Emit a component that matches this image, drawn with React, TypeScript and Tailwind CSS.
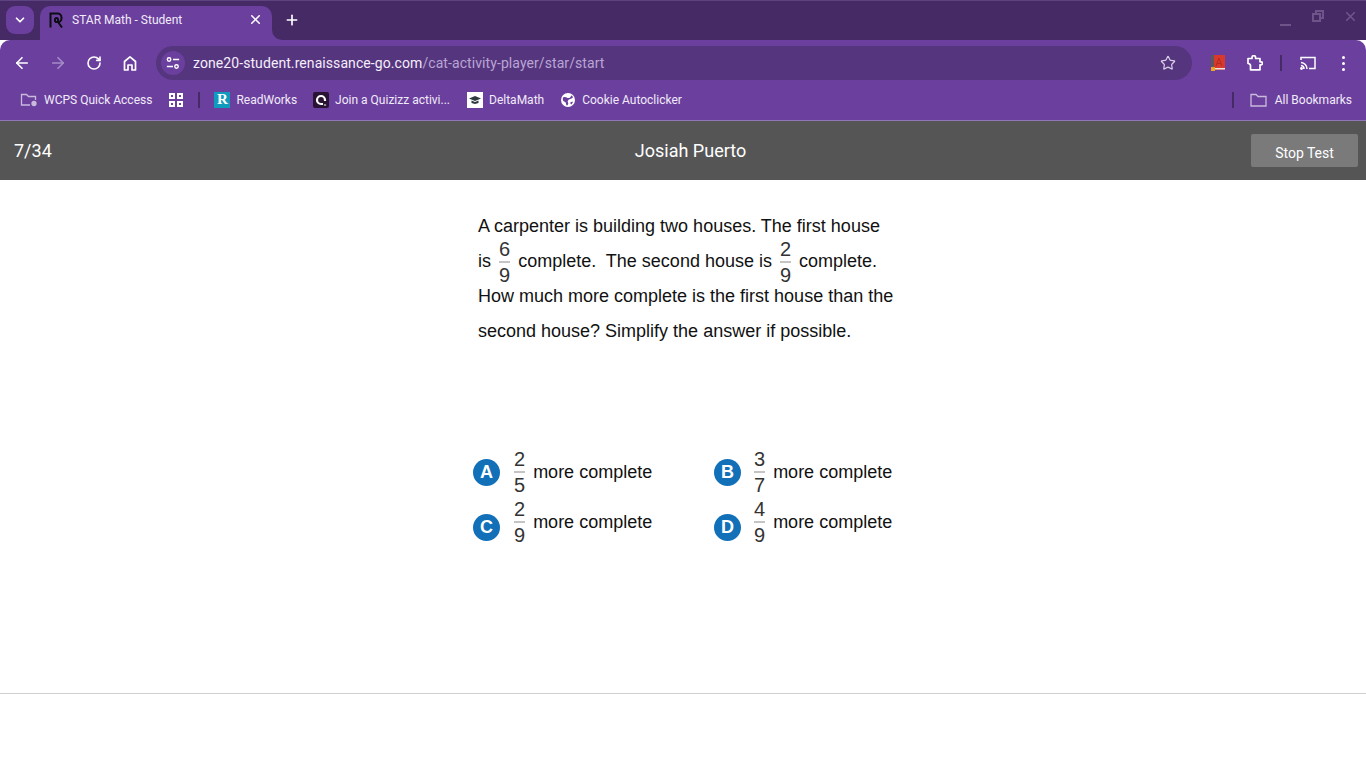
import { ArrowLeft, ArrowRight, ChevronDown, Plus, RotateCw, Star, X } from "lucide-react"

function Frac({ top, bottom }: { top: string; bottom: string }) {
  return (
    <span className="flex flex-col items-center text-[20px] leading-[24px] text-[#333]">
      <span className="h-[24px]">{top}</span>
      <span className="h-[2px] w-[11px] bg-[#c4c4c4]" />
      <span className="h-[24px]">{bottom}</span>
    </span>
  )
}

function Choice({ letter, top, bottom, badgeDrop, wide }: { letter: string; top: string; bottom: string; badgeDrop?: boolean; wide?: boolean }) {
  return (
    <div className="flex h-[50px] items-center">
      <span className={`flex h-[27px] w-[27px] items-center justify-center rounded-full bg-[#1170b8] text-[18px] font-bold text-white ${badgeDrop ? "mt-[10px]" : ""}`}>
        {letter}
      </span>
      <span className={wide ? "ml-[14px]" : "ml-[13px]"}>
        <Frac top={top} bottom={bottom} />
      </span>
      <span className="ml-[8px] text-[18px] text-[#111]">more complete</span>
    </div>
  )
}

function Bookmark({ icon, label, className }: { icon: React.ReactNode; label: string; className?: string }) {
  return (
    <div className={`flex items-center ${className ?? ""}`}>
      {icon}
      <span className="ml-[6px] whitespace-nowrap text-[12px] text-[#f1ebf8]">{label}</span>
    </div>
  )
}

export default function App() {
  return (
    <div className="flex h-[768px] flex-col overflow-hidden bg-white font-['Roboto',sans-serif]">
      {/* tab strip */}
      <div className="flex h-[40px] shrink-0 border-t border-[#5d4480] bg-[#452a66]">
        <div className="ml-[6px] mt-[5px] flex h-[28px] w-[28px] items-center justify-center rounded-[9px] bg-[#6b3f9e]">
          <ChevronDown className="h-[14px] w-[14px] text-white" strokeWidth={3} />
        </div>
        <div className="relative ml-[6px] mt-[5px] flex h-[34px] w-[232px] items-center rounded-t-[10px] bg-[#6b3f9e] pb-[6px] pl-[8px]">
          <svg viewBox="0 0 16 16" className="h-[16px] w-[16px]" fill="none" stroke="#0d0d14" strokeWidth="2">
            <path d="M2.500 15.500V1.500h7a4 4 0 0 1 4 4v1a3.500 3.500 0 0 1-3.500 3.500H7" />
            <path d="M7 10V7.500a1.500 1.500 0 0 1 3 0V10l4 5.500" />
          </svg>
          <span className="ml-[8px] text-[12px] text-[#f1ebf8]">STAR Math - Student</span>
          <X className="absolute right-[9px] top-[6px] h-[15px] w-[15px] text-white" strokeWidth={2.5} />
          {/* flare into the toolbar */}
          <svg viewBox="0 0 10 10" className="absolute -right-[10px] bottom-0 h-[10px] w-[10px]">
            <path d="M0 0a10 10 0 0 0 10 10H0z" fill="#6b3f9e" />
          </svg>
        </div>
        <Plus className="ml-[12px] mt-[11px] h-[16px] w-[16px] text-white" strokeWidth={2.5} />
        <div className="ml-auto mr-[8px] mt-[5px] flex h-[20px] items-center gap-[19px] text-[#6d5489]">
          <span className="flex h-[20px] w-[15px] items-end justify-center">
            <span className="h-[2px] w-[11px] bg-[#6d5489]" />
          </span>
          <svg viewBox="0 0 12 12" className="h-[12px] w-[12px]" fill="none" stroke="#6d5489" strokeWidth="2">
            <path d="M4 3V1h7v7H9" />
            <path d="M1 4h7v7H1z" />
          </svg>
          <X className="h-[15px] w-[15px]" strokeWidth={2.8} />
        </div>
      </div>

      {/* toolbar */}
      <div className="flex h-[45px] shrink-0 items-center rounded-t-[10px] bg-[#6b3f9e] pt-[1px]">
        <div className="flex w-[156px] items-center pl-[13px] text-white">
          <ArrowLeft className="h-[18px] w-[18px]" strokeWidth={2.2} />
          <ArrowRight className="ml-[18px] h-[18px] w-[18px] text-[#a58cc6]" strokeWidth={2.2} />
          <RotateCw className="ml-[19px] h-[16px] w-[16px]" strokeWidth={2.4} />
          <svg viewBox="0 0 16 16" className="ml-[20px] h-[16px] w-[16px]" fill="none" stroke="#fff" strokeWidth="1.700" strokeLinejoin="round">
            <path d="M2.500 15V6.500L8 1.800l5.500 4.700V15h-3.500v-5H6v5z" />
          </svg>
        </div>
        <div className="flex h-[34px] w-[1036px] items-center rounded-full bg-[#56357f] pl-[5px] pr-[16px]">
          <span className="flex h-[24px] w-[24px] items-center justify-center rounded-full bg-[#6b3f9e]">
            <svg viewBox="0 0 16 16" className="h-[14px] w-[14px]" fill="none" stroke="#fff" strokeWidth="1.600">
              <circle cx="3.500" cy="4" r="2" />
              <path d="M8 4h7M1 12h7" />
              <circle cx="12" cy="12" r="2" />
            </svg>
          </span>
          <span className="ml-[8px] text-[14px] tracking-[0.08px] text-[#f4eefa]">
            zone20-student.renaissance-go.com<span className="text-[#b9a5d4]">/cat-activity-player/star/start</span>
          </span>
          <Star className="ml-auto h-[16px] w-[16px] text-[#d8cfe6]" strokeWidth={1.800} />
        </div>
        <div className="flex items-center text-white">
          <svg viewBox="0 0 14 16" className="ml-[19px] h-[16px] w-[14px]">
            <rect width="14" height="15" fill="#d9382c" />
            <rect width="3" height="15" fill="#5a5a5a" />
            <path d="M5 11l3-8 3 8M6 8.500h4" fill="none" stroke="#b52a20" strokeWidth="1" />
            <rect x="3" y="13" width="11" height="1.500" fill="#e8e8e8" />
            <rect y="12" width="4" height="4" fill="#e9a81f" />
          </svg>
          <svg viewBox="0 0 16 16" className="ml-[22px] h-[16px] w-[16px]" fill="none" stroke="#fff" strokeWidth="1.700" strokeLinejoin="round">
            <path d="M1 3.500h4V2.500a1.800 1.800 0 0 1 3.600 0v1H13v3.300h1a1.500 1.500 0 0 1 0 3h-1v5H3.500v-3.300a2.500 2.500 0 0 0-2.500-3z" />
          </svg>
          <span className="ml-[17px] h-[16px] w-[2px] bg-[#452a66]" />
          <svg viewBox="0 0 16 14" className="ml-[18px] h-[14px] w-[16px]" fill="none" stroke="#fff" strokeWidth="1.500">
            <path d="M1 4V1.500h14v11H9" />
            <path d="M1 6.500a6.500 6.500 0 0 1 6 6.500M1 9.500a3.500 3.500 0 0 1 3 3.500" />
            <circle cx="1.500" cy="12.500" r=".7" fill="#fff" />
          </svg>
          <span className="ml-[26px] flex flex-col gap-[3px]">
            <span className="h-[3px] w-[3px] rounded-full bg-white" />
            <span className="h-[3px] w-[3px] rounded-full bg-white" />
            <span className="h-[3px] w-[3px] rounded-full bg-white" />
          </span>
        </div>
      </div>

      {/* bookmarks bar */}
      <div className="flex h-[36px] shrink-0 items-center border-b border-[#9177b8] bg-[#6b3f9e] pb-[6px] pl-[20px]">
        <Bookmark
          label="WCPS Quick Access"
          icon={
            <svg viewBox="0 0 18 16" className="h-[16px] w-[18px]" fill="none" stroke="#c9bbdc" strokeWidth="1.300">
              <path d="M10 13H1.500V2.500h5l2 2h7V8" />
              <circle cx="14" cy="11.500" r="2" fill="#c9bbdc" />
            </svg>
          }
        />
        <div className="ml-[17px] grid grid-cols-2 gap-[2px]">
          <span className="h-[6px] w-[6px] border-2 border-white" />
          <span className="h-[6px] w-[6px] border-2 border-white" />
          <span className="h-[6px] w-[6px] border-2 border-white" />
          <span className="h-[6px] w-[6px] border-2 border-white" />
        </div>
        <span className="ml-[15px] h-[16px] w-[2px] bg-[#452a66]" />
        <Bookmark
          className="ml-[14px]"
          label="ReadWorks"
          icon={
            <span className="flex h-[16px] w-[16px] items-center justify-center bg-[#0e9bbd] font-['Liberation_Serif',serif] text-[15px] font-bold leading-none text-white">
              R
            </span>
          }
        />
        <Bookmark
          className="ml-[16px]"
          label="Join a Quizizz activi..."
          icon={
            <span className="flex h-[16px] w-[16px] items-center justify-center rounded-[2px] bg-[#2a1433]">
              <svg viewBox="0 0 12 12" className="h-[12px] w-[12px]" fill="none" stroke="#fff" strokeWidth="2.200">
                <path d="M8 10H6a4 4 0 1 1 4-4v1" />
                <path d="M10 10.500v1" />
              </svg>
            </span>
          }
        />
        <Bookmark
          className="ml-[17px]"
          label="DeltaMath"
          icon={
            <span className="flex h-[16px] w-[16px] items-center justify-center bg-white">
              <svg viewBox="0 0 12 8" className="h-[8px] w-[12px]" fill="#2d3a40">
                <path d="M6 0l6 2.500L6 5 0 2.500z" />
                <path d="M2.500 4.500L6 6l3.500-1.500V7L6 8 2.500 7z" />
              </svg>
            </span>
          }
        />
        <Bookmark
          className="ml-[16px]"
          label="Cookie Autoclicker"
          icon={
            <svg viewBox="0 0 16 16" className="h-[16px] w-[16px]">
              <circle cx="8" cy="8" r="7" fill="#fff" />
              <path d="M3 5.500c3-1.500 4 1 6 .5s2-3 3-2.500l1 2c-2 2-4 1-5 3s1 2 0 4-2 .5-2-1-1-1.500-2-2-1.500-2-1-4zM10 11c1-1 2-1.500 3-1l-1.500 2.500z" fill="#6b3f9e" />
            </svg>
          }
        />
        <span className="ml-auto h-[16px] w-[2px] bg-[#452a66]" />
        <Bookmark
          className="ml-[16px] mr-[14px]"
          label="All Bookmarks"
          icon={
            <svg viewBox="0 0 17 14" className="mr-[2px] h-[14px] w-[17px]" fill="none" stroke="#c9bbdc" strokeWidth="1.300">
              <path d="M1 13V1.500h5l2 2h8V13z" />
            </svg>
          }
        />
      </div>

      {/* test header */}
      <div className="flex h-[59px] shrink-0 items-center bg-[#555555] pl-[14px] pr-[8px] text-white">
        <span className="flex-1 text-[18px]">7/34</span>
        <span className="ml-[9px] text-[18px]">Josiah Puerto</span>
        <div className="flex flex-1 justify-end">
          <button className="mb-[1px] h-[33px] w-[107px] rounded-[2px] bg-[#7a7a7a] pt-[7px] text-[14px] text-white">Stop Test</button>
        </div>
      </div>

      {/* question */}
      <div className="h-[514px] shrink-0 border-b border-[#cfcfcf] pl-[478px] pt-[29px] font-['Liberation_Sans',sans-serif] text-[18px] text-[#111]">
        <p className="flex h-[35px] items-center">A carpenter is building two houses. The first house</p>
        <div className="flex h-[35px] items-center whitespace-pre">
          <span>is</span>
          <span className="ml-[8px] mr-[8px]">
            <Frac top="6" bottom="9" />
          </span>
          <span>complete.  The second house is</span>
          <span className="ml-[8px] mr-[8px]">
            <Frac top="2" bottom="9" />
          </span>
          <span>complete.</span>
        </div>
        <p className="flex h-[35px] items-center">How much more complete is the first house than the</p>
        <p className="flex h-[35px] items-center">second house? Simplify the answer if possible.</p>

        <div className="-ml-[5px] mt-[98px] grid w-[420px] grid-cols-[241px_1fr]">
          <Choice letter="A" top="2" bottom="5" wide />
          <Choice letter="B" top="3" bottom="7" />
          <Choice letter="C" top="2" bottom="9" badgeDrop wide />
          <Choice letter="D" top="4" bottom="9" badgeDrop />
        </div>
      </div>
    </div>
  )
}
